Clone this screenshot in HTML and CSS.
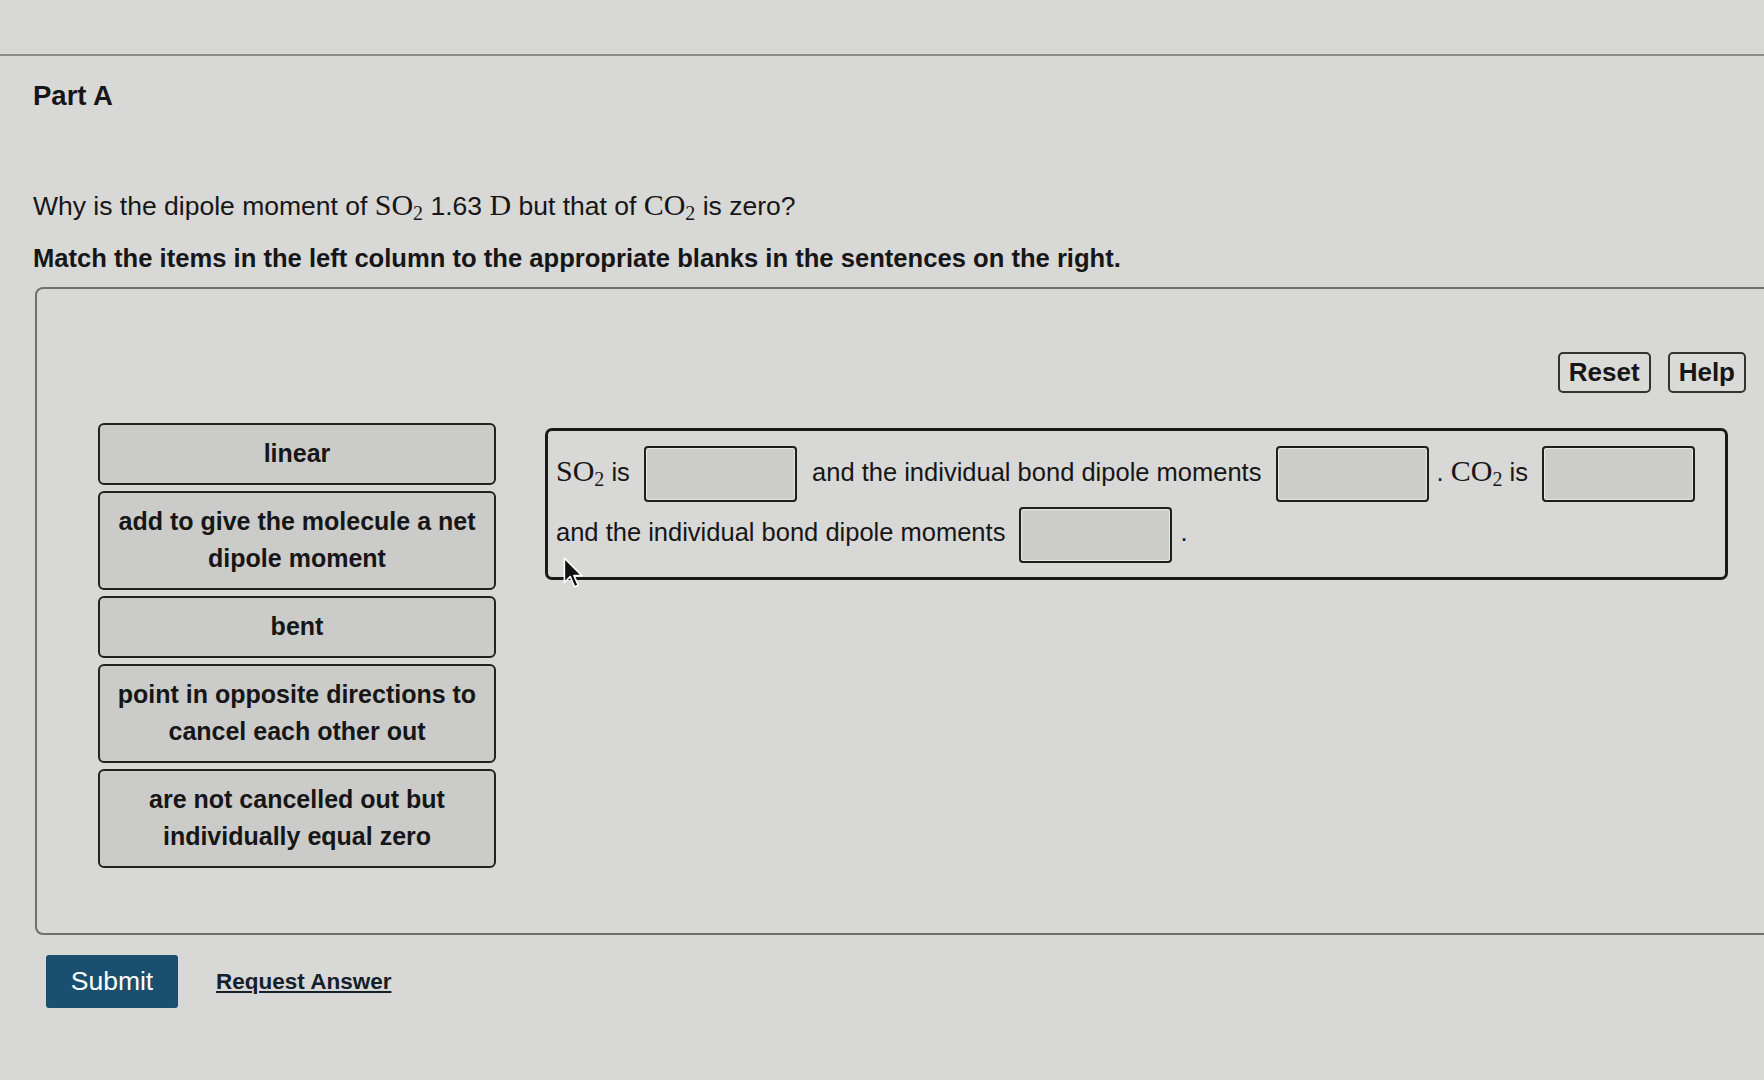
FILE: index.html
```html
<!DOCTYPE html>
<html>

<head>
    <meta charset="UTF-8">
    <meta name="viewport" content="width=device-width, initial-scale=1.0">
    <title>Part A</title>
    <link rel="stylesheet" href="styles.css">
</head>

<body>
    <div class="top-rule"></div>

    <div class="part">
        <h2 class="part-title">Part A</h2>

        <p class="question">
            Why is the dipole moment of <span class="chem">SO<sub>2</sub></span> 1.63 <span class="chem">D</span>
            but that of <span class="chem">CO<sub>2</sub></span> is zero?
        </p>
        <p class="instruction">Match the items in the left column to the appropriate blanks in the sentences on the right.</p>

        <div class="panel">
            <div class="toolbar">
                <button class="tool-btn">Reset</button>
                <button class="tool-btn">Help</button>
            </div>

            <div class="match">
                <div class="items">
                    <div class="item">linear</div>
                    <div class="item">add to give the molecule a net dipole moment</div>
                    <div class="item">bent</div>
                    <div class="item">point in opposite directions to cancel each other out</div>
                    <div class="item">are not cancelled out but individually equal zero</div>
                </div>

                <div class="sentences">
                    <span class="chem">SO<sub>2</sub></span> is <span class="blank"></span>
                    and the individual bond dipole moments <span class="blank"></span>.
                    <span class="chem">CO<sub>2</sub></span> is <span class="blank"></span>
                    and the individual bond dipole moments <span class="blank"></span>.

                    <!-- mouse pointer resting on the sentence box -->
                    <svg class="pointer" width="24" height="34" viewBox="0 0 22 32">
                        <path d="M1 1 L1 24 L6.5 18.5 L10.5 28 L14 26.5 L10 17.5 L17.5 17.5 Z" fill="#111" stroke="#fff" stroke-width="1.5" stroke-linejoin="round"/>
                    </svg>
                </div>
            </div>
        </div>

        <div class="actions">
            <button class="submit">Submit</button>
            <a href="#" class="request">Request Answer</a>
        </div>
    </div>
</body>

</html>
```

FILE: styles.css
```css
html, body {
    overflow: hidden;
}
body {
    margin: 0;
    background: #d8d8d6;
    color: #161616;
    font-family: "Liberation Sans", Arial, sans-serif;
    font-size: 25px;
}
.top-rule {
    margin-top: 54px;
    border-top: 2px solid #8c8c8c;
}
.part {
    padding-left: 33px;
}
.part-title {
    margin: 25px 0 0;
    font-size: 27.5px;
    line-height: 30px;
    font-weight: bold;
}
.question {
    margin: 79px 0 0;
    font-size: 26.5px;
    line-height: 30px;
}
.instruction {
    margin: 20px 0 0;
    font-size: 25.6px;
    line-height: 30px;
    font-weight: bold;
}
.chem {
    font-family: "Liberation Serif", "Times New Roman", serif;
    font-size: 30px;
    line-height: 1;
}
.chem sub {
    font-size: 20px;
    vertical-align: -5px;
    line-height: 1;
}
.panel {
    margin: 14px -30px 0 2px;
    padding: 63px 0 60px 61px;
    border: 2px solid #6f6f6f;
    border-radius: 8px;
    height: 521px;
}
.toolbar {
    display: flex;
    justify-content: flex-end;
    gap: 17px;
    padding-right: 46px;
}
.tool-btn {
    font-family: inherit;
    font-size: 26px;
    font-weight: bold;
    color: #161616;
    background: #dadad8;
    border: 2px solid #333;
    border-radius: 5px;
    height: 41px;
    padding: 0 9px;
}
.match {
    display: flex;
    align-items: flex-start;
    gap: 49px;
    margin-top: 30px;
}
.items {
    width: 398px;
    display: flex;
    flex-direction: column;
    gap: 6px;
}
.item {
    background: #cbcbc9;
    border: 2px solid #222;
    border-radius: 6px;
    text-align: center;
    font-weight: bold;
    line-height: 37px;
    padding: 10px 10px 11px;
}
.sentences {
    position: relative;
    margin-top: 5px;
    width: 1159px;
    padding: 11px 10px 14px 8px;
    border: 3px solid #1a1a1a;
    border-radius: 7px;
    font-size: 25.5px;
    line-height: 60px;
}
.blank {
    display: inline-block;
    vertical-align: middle;
    width: 149px;
    height: 52px;
    margin: 0 8px 0 7px;
    background: #cdcdcb;
    border: 2px solid #1e1e1e;
    border-radius: 4px;
    box-shadow: inset 0 0 0 1px #e6e6e4;
}
.pointer {
    position: absolute;
    left: 15px;
    top: 126px;
}
.actions {
    display: flex;
    align-items: center;
    gap: 38px;
    margin: 20px 0 0 13px;
}
.submit {
    font-family: inherit;
    font-size: 26.5px;
    color: #fff;
    background: #1b4f6f;
    border: none;
    border-radius: 3px;
    width: 132px;
    height: 53px;
}
.request {
    color: #14202c;
    font-weight: bold;
    font-size: 22.5px;
    text-decoration: underline;
}
```
